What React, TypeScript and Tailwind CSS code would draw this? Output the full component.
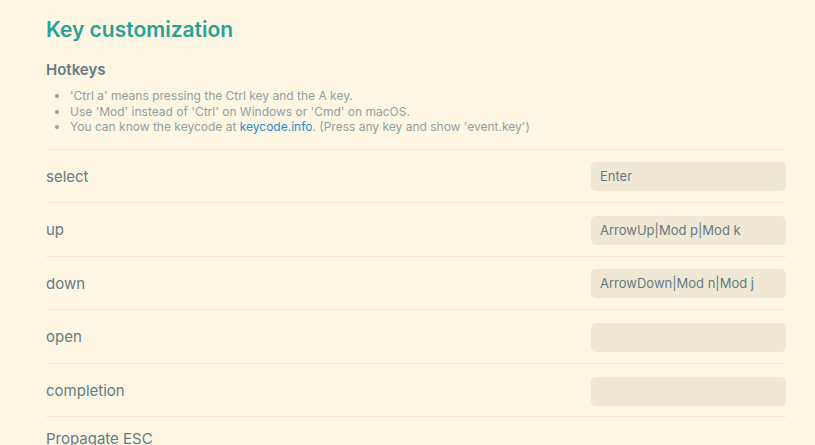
import React from "react";

const hotkeys: { name: string; keys: string[] }[] = [
    { name: "select", keys: ["Enter"] },
    { name: "up", keys: ["ArrowUp", "Mod p", "Mod k"] },
    { name: "down", keys: ["ArrowDown", "Mod n", "Mod j"] },
    { name: "open", keys: [] },
    { name: "completion", keys: [] },
];

function KeyInput({ keys }: { keys: string[] }) {
    return (
        <div className="w-[195px] h-[29px] rounded-[5px] bg-[#eee8d5] px-[9px] flex items-center text-[13px] text-[#657b83] whitespace-nowrap">
            {keys.join("|")}
        </div>
    );
}

export default function App() {
    return (
        <div className="min-h-screen w-full bg-[#fdf6e3] font-['Inter',sans-serif] overflow-hidden">
            <div className="px-[46px] pt-[14px] w-[832px]">
                <h1 className="text-[21px] font-semibold text-[#2aa198] leading-[32px]">Key customization</h1>
                <h2 className="mt-[14px] text-[15px] font-semibold text-[#657b83] leading-[20px]">Hotkeys</h2>
                <ul className="mt-[8px] pl-[24px] list-disc text-[12px] leading-[15.5px] text-[#93a1a1] marker:text-[#93a1a1]">
                    <li>'Ctrl a' means pressing the Ctrl key and the A key.</li>
                    <li>Use 'Mod' instead of 'Ctrl' on Windows or 'Cmd' on macOS.</li>
                    <li>
                        You can know the keycode at <span className="text-[#268bd2]">keycode.info</span>. (Press any key and show 'event.key')
                    </li>
                </ul>
                <div className="mt-[14px] w-[740px]">
                    {hotkeys.map((h) => (
                        <div key={h.name} className="flex items-center justify-between border-t border-[#eee8d5] h-[53.6px] pt-[2px]">
                            <span className="text-[15px] text-[#657b83]">{h.name}</span>
                            <KeyInput keys={h.keys} />
                        </div>
                    ))}
                    <div className="flex items-start border-t border-[#eee8d5] pt-[11px] pb-[10px]">
                        <span className="text-[15px] leading-[22px] text-[#657b83]">Propagate ESC</span>
                    </div>
                </div>
            </div>
        </div>
    );
}
